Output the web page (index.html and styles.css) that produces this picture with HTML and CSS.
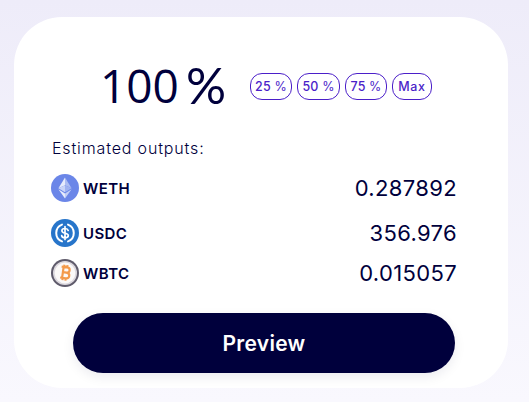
FILE: index.html
```html
<!DOCTYPE html>
<html lang="en">
<head>
<meta charset="utf-8">
<title>Remove liquidity</title>
<link rel="stylesheet" href="styles.css">
</head>
<body>
<main class="card">
  <section class="amount-row">
    <div class="percent"><span class="percent-num">100</span><span class="percent-sign">%</span></div>
    <div class="chips">
      <button class="chip chip-a">25 <span class="chip-unit">%</span></button>
      <button class="chip chip-b">50 <span class="chip-unit">%</span></button>
      <button class="chip chip-a">75 <span class="chip-unit">%</span></button>
      <button class="chip chip-m">Max</button>
    </div>
  </section>
  <p class="label">Estimated outputs:</p>
  <ul class="outputs">
    <li class="output output-weth">
      <span class="token">
        <svg class="icon" viewBox="0 0 28 28"><circle cx="14" cy="14" r="14" fill="#6b86e8"/><path d="M14 3.5v7.8l6.6 3z" fill="#c3cff6" opacity=".75"/><path d="M14 3.5 7.4 14.3l6.6-3z" fill="#e6ebfc"/><path d="M14 11.3v6.9l6.6-3.9z" fill="#9fb2f1"/><path d="M7.4 14.3l6.6 3.9v-6.9z" fill="#c9d4f8"/><path d="M14 19.5v5l6.6-9.2z" fill="#c3cff6"/><path d="M14 19.5l-6.6-4.2 6.6 9.2z" fill="#e6ebfc"/></svg>
        <span class="symbol">WETH</span>
      </span>
      <span class="value">0.287892</span>
    </li>
    <li class="output output-usdc">
      <span class="token">
        <svg class="icon" viewBox="0 0 28 28"><circle cx="14" cy="14" r="14" fill="#2775ca"/><path d="M11 5.6a9 9 0 0 0 0 16.8M17 5.6a9 9 0 0 1 0 16.8" fill="none" stroke="#fff" stroke-width="2" stroke-linecap="round"/><path d="M17.2 11.4c-.4-1.3-1.6-1.9-3.2-1.9-1.8 0-3.1.9-3.1 2.3 0 3.4 6.4 1.5 6.4 4.7 0 1.4-1.4 2.3-3.3 2.3-1.8 0-3-.8-3.3-2.1M14 7.6v12.8" fill="none" stroke="#fff" stroke-width="1.7" stroke-linecap="round"/></svg>
        <span class="symbol">USDC</span>
      </span>
      <span class="value">356.976</span>
    </li>
    <li class="output output-wbtc">
      <span class="token">
        <svg class="icon" viewBox="0 0 28 28"><circle cx="14" cy="14" r="14" fill="#5f5b6b"/><circle cx="14" cy="14" r="12" fill="#dcd8de"/><circle cx="14" cy="14" r="10.4" fill="#fbf9f8"/><g transform="rotate(8 14 14)" fill="none" stroke="#f39a4b" stroke-width="2.2"><path d="M9.8 8.2h5.6c1.8 0 2.8 1 2.8 2.6s-1 2.6-2.8 2.6c2 0 3.2 1.1 3.2 2.8s-1.2 2.9-3.2 2.9H9.8M11.8 8.2v10.7M11.8 13.4h3.6M12.4 5.9v2.3M15.4 5.9v2.3M12.4 18.9v2.6M15.4 18.9v2.6"/></g></svg>
        <span class="symbol">WBTC</span>
      </span>
      <span class="value">0.015057</span>
    </li>
  </ul>
  <button class="preview">Preview</button>
</main>
</body>
</html>
```
FILE: styles.css
```css
* { box-sizing: border-box; }
html, body { height: 100%; }
body {
  margin: 0;
  padding: 17px 21px 14px 14px;
  background: linear-gradient(180deg, #eeecf9 0%, #f9f8fe 100%);
  font-family: "Inter", "Liberation Sans", sans-serif;
  color: #00003c;
  overflow: hidden;
}
.card {
  width: 494px;
  height: 371px;
  background: #fff;
  border-radius: 48px;
  padding: 35px 51px 0 38px;
}
.amount-row {
  display: flex;
  align-items: center;
  height: 68px;
  padding-left: 48px;
}
.percent {
  display: flex;
  gap: 7px;
  width: 150px;
  padding-bottom: 3px;
  font-size: 46px;
  font-weight: 400;
  line-height: 64px;
}
.percent-num { font-family: "Open Sans", sans-serif; }
.percent-sign { font-family: "Lato", sans-serif; font-size: 50px; }
.chips { display: flex; gap: 5px; }
.chip {
  height: 27px;
  padding: 0;
  border: 1px solid #4b1fc9;
  border-radius: 12px;
  background: #fff;
  color: #4b1fc9;
  font-family: inherit;
  font-size: 12.5px;
  font-weight: 500;
  letter-spacing: .2px;
}
.chip-unit { font-weight: 400; }
.chip-a { width: 42px; }
.chip-b { width: 43px; }
.chip-m { width: 40px; letter-spacing: .6px; }
.label {
  margin: 18px 0 0;
  font-size: 16px;
  font-weight: 300;
  line-height: 20px;
  letter-spacing: .85px;
}
.outputs { list-style: none; margin: 0; padding: 0; }
.output {
  display: flex;
  align-items: center;
  justify-content: space-between;
}
.output-weth { margin-top: 16px; height: 28px; }
.output-usdc { margin-top: 17px; height: 28px; }
.output-wbtc { margin-top: 12px; height: 28px; }
.token { display: flex; align-items: center; gap: 4px; margin-left: -1px; }
.icon { width: 28px; height: 28px; display: block; }
.symbol {
  font-size: 15px;
  font-weight: 600;
  letter-spacing: .4px;
}
.value {
  font-size: 22px;
  font-weight: 400;
  letter-spacing: .35px;
}
.preview {
  display: block;
  width: 382px;
  height: 60px;
  margin: 26px 0 0 21px;
  border: 0;
  border-radius: 30px;
  background: #00003c;
  color: #fff;
  font-family: inherit;
  font-size: 21px;
  font-weight: 600;
  letter-spacing: .3px;
  box-shadow: 0 4px 12px rgba(0, 0, 60, .08);
}
```
